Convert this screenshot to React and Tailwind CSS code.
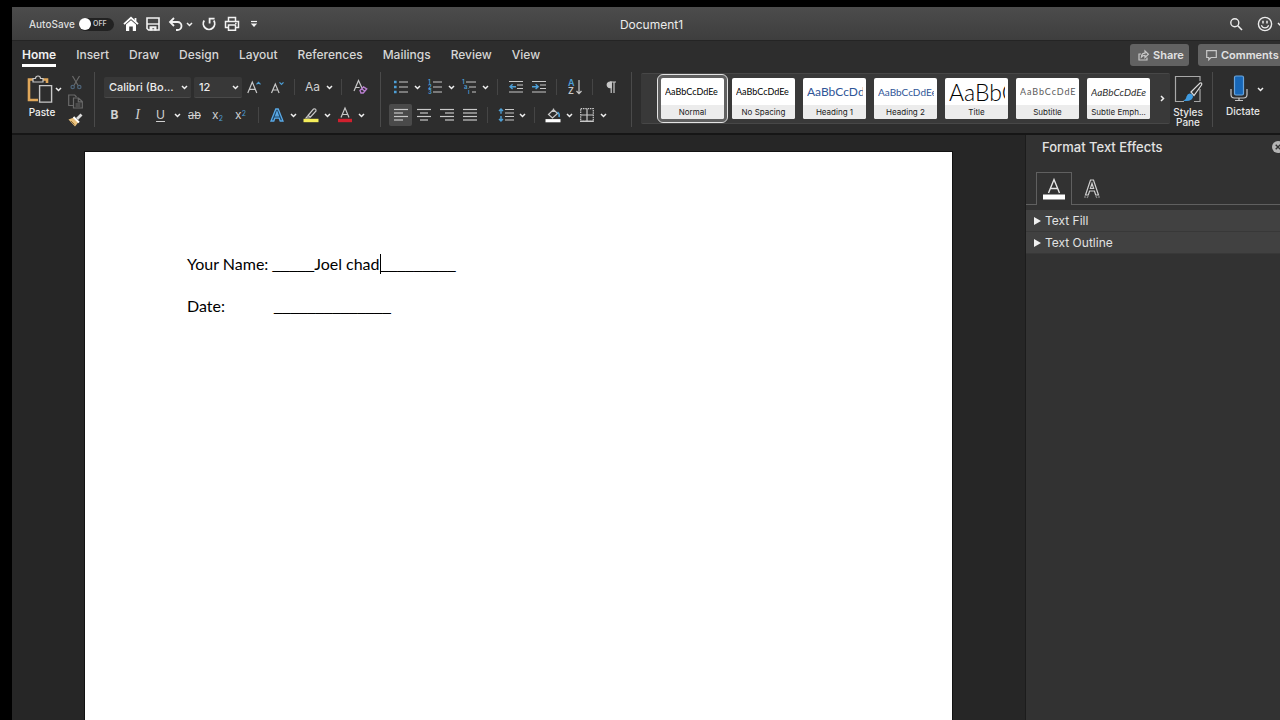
import React from "react";
import clsx from "clsx";

const TABS = [
  "Home",
  "Insert",
  "Draw",
  "Design",
  "Layout",
  "References",
  "Mailings",
  "Review",
  "View",
];

const STYLES = [
  { name: "Normal", sample: "text-[9px] text-black" },
  { name: "No Spacing", sample: "text-[9px] text-black" },
  { name: "Heading 1", sample: "text-[12px] text-[#2f5597]" },
  { name: "Heading 2", sample: "text-[10px] text-[#2f5597]" },
  { name: "Title", sample: "text-[23px] font-light text-black" },
  { name: "Subtitle", sample: "text-[9px] tracking-widest text-[#5a5a5a]" },
  { name: "Subtle Emph...", sample: "text-[10px] italic text-[#303030]" },
];

const SANS = "font-['Inter','Liberation_Sans',sans-serif]";
const BODY = "font-['Lato','Liberation_Sans',sans-serif]";

/* ---------- small building blocks ---------- */

function Icon({ w = 16, h = 16, className, children }) {
  return (
    <svg
      width={w}
      height={h}
      viewBox={`0 0 ${w} ${h}`}
      fill="none"
      stroke="#c8c8c8"
      strokeWidth="1.2"
      className={clsx("shrink-0 overflow-visible", className)}
      aria-hidden="true"
    >
      {children}
    </svg>
  );
}

function Chevron() {
  return (
    <Icon w={7} h={5}>
      <path d="M1 1l2.5 2.5L6 1" stroke="#f0f0f0" strokeWidth="1.5" />
    </Icon>
  );
}

function Tool({ label, active, children }) {
  return (
    <button
      type="button"
      aria-label={label}
      className={clsx(
        "flex h-[22px] w-[23px] items-center justify-center rounded-xs",
        active && "bg-[#4a4a4a]",
      )}
    >
      {children}
    </button>
  );
}

function More({ label }) {
  return (
    <button
      type="button"
      aria-label={label}
      className="flex h-[22px] w-[11px] items-center justify-center"
    >
      <Chevron />
    </button>
  );
}

function Split() {
  return (
    <span className="flex w-[13px] justify-center">
      <span className="h-4 w-px bg-[#454545]" />
    </span>
  );
}

function GroupLine() {
  return <span className="w-px shrink-0 self-stretch bg-[#4a4a4a]" />;
}

function Lines({ rows }) {
  return (
    <Icon w={14} h={14}>
      {rows.map(([x1, x2], i) => (
        <path key={i} d={`M${x1} ${1.5 + i * 3.5}H${x2}`} />
      ))}
    </Icon>
  );
}

/* ---------- title bar ---------- */

function TitleBar() {
  return (
    <header className="grid h-[33px] grid-cols-[1fr_auto_1fr] items-center bg-linear-to-b from-[#4c4c4c] to-[#3e3e3e] pt-px">
      <div className="flex items-center pl-[17px]">
        <label
          htmlFor="autosave"
          className="w-[50px] text-[10px] leading-4 font-medium text-[#dedede]"
        >
          AutoSave
        </label>
        <span className="relative flex h-[13px] w-[35px] items-center rounded-full bg-[#222222]">
          <input
            id="autosave"
            type="checkbox"
            role="switch"
            className="absolute inset-0 appearance-none"
          />
          <span className="size-3 rounded-full bg-white" />
          <span className="ml-0.5 text-[7px] leading-3 font-semibold text-[#c9c9c9]">
            OFF
          </span>
        </span>
        <div className="ml-[9px] flex items-center">
          <button type="button" aria-label="Home" className="w-[22px]">
            <Icon>
              <path d="M1 8.2L8 1.8l7 6.4" stroke="#fff" strokeWidth="1.8" />
              <path d="M12.5 2v4" stroke="#fff" strokeWidth="1.8" />
              <path
                d="M3 8.6L8 4.2l5 4.4V15H9.8v-4.5H6.2V15H3z"
                fill="#fff"
                stroke="none"
              />
            </Icon>
          </button>
          <button type="button" aria-label="Save" className="w-[23px]">
            <Icon>
              <path
                d="M2 2h12v12H3.5L2 12.5z"
                stroke="#f2f2f2"
                strokeWidth="1.6"
              />
              <path d="M2 8h12" stroke="#f2f2f2" strokeWidth="1.4" />
              <path
                d="M4.5 10.2h7v4.3H9.2v-2.2H7.4v2.2H4.5z"
                fill="#f2f2f2"
                stroke="none"
              />
            </Icon>
          </button>
          <button type="button" aria-label="Undo" className="w-[18px]">
            <Icon>
              <path
                d="M6 2L2 6l4 4M2.3 6h7.2a4 4 0 0 1 0 8H8"
                stroke="#f2f2f2"
                strokeWidth="1.8"
              />
            </Icon>
          </button>
          <button type="button" aria-label="Undo history" className="w-[15px]">
            <Chevron />
          </button>
          <button type="button" aria-label="Repeat" className="w-[23px]">
            <Icon>
              <path
                d="M3.2 4.6a5.7 5.7 0 1 0 9.6 0M8.6 7.4V2.6h5"
                stroke="#f2f2f2"
                strokeWidth="1.8"
              />
            </Icon>
          </button>
          <button type="button" aria-label="Print" className="w-[26px]">
            <Icon>
              <path d="M4.5 5V1.5h7V5" stroke="#f2f2f2" strokeWidth="1.5" />
              <path
                d="M4 11.5H1.5v-6h13v6H12"
                stroke="#f2f2f2"
                strokeWidth="1.5"
              />
              <path d="M4.500 9h7v5.300h-7z" stroke="#f2f2f2" strokeWidth="1.5" />
              <path d="M11 7.300h1.600" stroke="#f2f2f2" />
            </Icon>
          </button>
          <button type="button" aria-label="Customize toolbar">
            <Icon w={8} h={8}>
              <path d="M1 1.5h6" stroke="#f2f2f2" />
              <path d="M0.800 3.600h6.400L4 7z" fill="#f2f2f2" stroke="none" />
            </Icon>
          </button>
        </div>
      </div>
      <h1 className="pt-0.5 text-[12px] leading-4 text-[#ececec]">Document1</h1>
      <div className="flex items-center justify-end pr-[7px]">
        <button type="button" aria-label="Search" className="mr-3.5">
          <Icon w={14} h={14}>
            <circle cx="5.8" cy="5.8" r="4" stroke="#ececec" strokeWidth="1.4" />
            <path d="M8.8 8.8L13 13" stroke="#ececec" strokeWidth="1.6" />
          </Icon>
        </button>
        <button
          type="button"
          aria-label="Feedback"
          className="flex items-center gap-1"
        >
          <Icon>
            <circle cx="8" cy="8" r="6.6" stroke="#ececec" strokeWidth="1.4" />
            <path d="M6 4.8v2.6M10 4.8v2.6" stroke="#ececec" strokeWidth="1.5" />
            <path d="M4.4 9.2a3.8 3.8 0 0 0 7.2 0" stroke="#ececec" />
          </Icon>
          <Chevron />
        </button>
      </div>
    </header>
  );
}

/* ---------- tab strip ---------- */

function TabStrip({ tab, onSelect }) {
  return (
    <div className="flex h-[30px] items-start border-t border-[#242424]">
      <nav className="flex gap-5 pl-[10px]">
        {TABS.map((name) => (
          <button
            key={name}
            type="button"
            onClick={() => onSelect(name)}
            className={clsx(
              "mt-1.5 flex h-5 items-start border-b-3 text-[12px] leading-4",
              name === tab
                ? "border-white font-semibold text-[#f0f0f0]"
                : "border-transparent font-medium text-[#d6d6d6]",
            )}
          >
            {name}
          </button>
        ))}
      </nav>
      <div className="mt-[3px] ml-auto flex gap-[9px] pr-[7px] text-[11px] leading-4 font-semibold text-[#e2e2e2]">
        <button
          type="button"
          className="flex h-[22px] w-[59px] items-center gap-1 rounded-[3px] bg-[#626262] pl-2"
        >
          <Icon w={11} h={12}>
            <path d="M3 5H1v6h8V8.5" />
            <path d="M3.4 8c.2-2.6 1.5-3.8 3.6-3.800V2l3.400 3.300L7 8.500V6.300C5.500 6.300 4.400 6.800 3.400 8z" />
          </Icon>
          Share
        </button>
        <button
          type="button"
          className="flex h-[22px] w-[86px] items-center gap-1 rounded-[3px] bg-[#626262] pl-2"
        >
          <Icon w={11} h={12}>
            <path d="M.7 1.700h9.600v6.800H5L2.800 10.800V8.500H.7z" />
          </Icon>
          Comments
        </button>
      </div>
    </div>
  );
}

/* ---------- ribbon ---------- */

function ClipboardGroup() {
  return (
    <div className="flex w-[82px] pl-[15px]">
      <div className="flex flex-col">
        <div className="flex items-center gap-0.5 pt-[3px]">
          <button type="button" aria-label="Paste clipboard">
            <Icon w={26} h={29}>
              <path d="M7 4.500H2v20.500h9" stroke="#e0a75a" strokeWidth="2.6" />
              <path d="M16 4.500h4V8" stroke="#e0a75a" strokeWidth="2.6" />
              <path
                d="M6 7V3.500h2.500a2.500 2.500 0 0 1 5 0H16V7z"
                fill="#2d2d2d"
              />
              <path
                d="M12.600 10.600h12v16.500h-12z"
                fill="#2d2d2d"
                strokeWidth="1.4"
              />
            </Icon>
          </button>
          <Chevron />
        </div>
        <span className="mt-0.5 w-[30px] text-center text-[10px] leading-3 font-medium text-[#f0f0f0]">
          Paste
        </span>
      </div>
      <div className="flex flex-col items-center gap-1 pt-[3px] pl-1.5">
        <button type="button" aria-label="Cut">
          <Icon w={14} h={15}>
            <g stroke="#6a6a6a">
              <path d="M3.500 1l5.600 9.500M10.500 1L4.900 10.500" />
              <circle cx="3.700" cy="12" r="1.700" stroke="#4e6478" />
              <circle cx="10.300" cy="12" r="1.700" stroke="#4e6478" />
            </g>
          </Icon>
        </button>
        <button type="button" aria-label="Copy">
          <Icon w={15} h={15}>
            <g stroke="#6a6a6a">
              <path d="M5 11.500H.7V1h6L8.500 3" />
              <path d="M5.500 4h5l3.800 3.500V14H5.500zM10.300 4v3.800h4M7.500 10h5M7.500 12h5" />
            </g>
          </Icon>
        </button>
        <button type="button" aria-label="Format painter">
          <Icon w={15} h={14}>
            <path
              d="M.5 6.500L6 4.500l4.500 4.500L7 13.500z"
              fill="#e9c07b"
              stroke="none"
            />
            <path d="M5.500 4l5.500 5.500" stroke="#fff" strokeWidth="2" />
            <path d="M9 6l4.500-4.500" stroke="#dcdcdc" strokeWidth="2.8" />
            <path d="M3 8l3.500 3.500" stroke="#7d5a20" strokeWidth="0.8" />
          </Icon>
        </button>
      </div>
    </div>
  );
}

function Combo({ label, value, className }) {
  return (
    <span className={clsx("relative flex items-center", className)}>
      <select
        aria-label={label}
        className="h-[21px] w-full appearance-none rounded-xs border-b border-[#4a4a4a] bg-[#383838] pl-[5px] text-[11px] leading-4 font-medium text-[#ececec]"
      >
        <option>{value}</option>
      </select>
      <span className="pointer-events-none absolute right-[3px]">
        <Chevron />
      </span>
    </span>
  );
}

function FontGroup() {
  return (
    <div className="flex flex-col gap-1.5 px-2 pt-1">
      <div className="flex items-center">
        <Combo label="Font" value="Calibri (Bo..." className="ml-px w-[87px]" />
        <Combo label="Font size" value="12" className="ml-[3px] w-[48px]" />
        <Tool label="Grow font">
          <Icon w={16} h={15}>
            <path d="M1.800 13L6.300 2 10.800 13M3.400 9.300h5.800" />
            <path d="M10.500 4.300l2-2 2 2" stroke="#4d9fd6" />
          </Icon>
        </Tool>
        <Tool label="Shrink font">
          <Icon w={16} h={15}>
            <path d="M2.500 13L6.300 4 10.100 13M3.900 10h4.800" />
            <path d="M10.500 2.300l2 2 2-2" stroke="#4d9fd6" />
          </Icon>
        </Tool>
        <Split />
        <Tool label="Change case">
          <span className="text-[12px] leading-4 text-[#d0d0d0]">Aa</span>
        </Tool>
        <More label="Case options" />
        <Split />
        <Tool label="Clear formatting">
          <Icon>
            <path d="M2 12L6.500 1.500 10 9M3.600 8.500h4" />
            <path
              d="M8 11.500l3.500-3.500 3.200 2-3.500 4H9zM9.700 9.800l2.800 2.200"
              stroke="#b97fd0"
              strokeWidth="1.4"
            />
          </Icon>
        </Tool>
      </div>
      <div className="flex items-center text-[12px] leading-4 text-[#d0d0d0]">
        <Tool label="Bold">
          <b className="font-bold">B</b>
        </Tool>
        <Tool label="Italic">
          <i className="font-['Liberation_Serif',serif] text-[14px]">I</i>
        </Tool>
        <Tool label="Underline">
          <u className="underline-offset-2">U</u>
        </Tool>
        <More label="Underline options" />
        <Tool label="Strikethrough">
          <s className="text-[11px]">ab</s>
        </Tool>
        <Tool label="Subscript">
          <span>
            x<sub className="text-[7px] text-[#4d9fd6]">2</sub>
          </span>
        </Tool>
        <Tool label="Superscript">
          <span>
            x<sup className="text-[7px] text-[#4d9fd6]">2</sup>
          </span>
        </Tool>
        <Split />
        <Tool label="Text effects">
          <Icon>
            <path
              d="M2 14L6.800 2h2.400L14 14h-2.800l-1-2.800H5.800l-1 2.800zM6.700 8.800h2.600L8 5z"
              stroke="#5aa9e6"
              strokeWidth="1.3"
              fill="#1d4668"
            />
          </Icon>
        </Tool>
        <More label="Text effect options" />
        <Tool label="Highlight">
          <Icon>
            <path d="M5 8.500l5.500-6.500q2.800-.8 2.500 2L7.500 10zM5 8.500L3 11h3l1.500-1" />
            <path d="M.5 13.500h15" stroke="#f5ee5a" strokeWidth="3.400" />
          </Icon>
        </Tool>
        <More label="Highlight colours" />
        <Tool label="Font colour">
          <Icon>
            <path d="M4 10.500L8 1l4 9.500M5.400 7.500h5.200" />
            <path d="M1 13.500h14" stroke="#d0202e" strokeWidth="3.400" />
          </Icon>
        </Tool>
        <More label="Font colours" />
      </div>
    </div>
  );
}

function ParagraphGroup() {
  return (
    <div className="flex flex-col gap-1.5 pt-1 pr-[9px] pl-2">
      <div className="flex items-center">
        <Tool label="Bullets">
          <Icon w={14} h={14}>
            <path d="M5 2h9M5 7h9M5 12h9" />
            <path
              d="M0 2h2.600M0 7h2.600M0 12h2.600"
              stroke="#4d9fd6"
              strokeWidth="2.6"
            />
          </Icon>
        </Tool>
        <More label="Bullet styles" />
        <Tool label="Numbering">
          <Icon w={14} h={16}>
            <path d="M5 3h9M5 8h9M5 13h9" />
            <g fill="#4d9fd6" stroke="none" fontSize="6" fontWeight="600">
              <text x="0" y="5">1</text>
              <text x="0" y="10">2</text>
              <text x="0" y="15">3</text>
            </g>
          </Icon>
        </Tool>
        <More label="Number styles" />
        <Tool label="Multilevel list">
          <Icon w={14} h={16}>
            <path d="M4 3h10M7 8h7M10 13h4" />
            <g fill="#4d9fd6" stroke="none" fontSize="6" fontWeight="600">
              <text x="0" y="5">1</text>
              <text x="2" y="10">a</text>
              <text x="6" y="15">i</text>
            </g>
          </Icon>
        </Tool>
        <More label="List levels" />
        <Split />
        <Tool label="Decrease indent">
          <Icon w={14} h={14}>
            <path d="M0 1.500h14M8 5h6M8 8.500h6M0 12h14" />
            <path
              d="M7 6.700H1.200M3.600 4.300L1 6.700l2.600 2.400"
              stroke="#4d9fd6"
              strokeWidth="1.4"
            />
          </Icon>
        </Tool>
        <Tool label="Increase indent">
          <Icon w={14} h={14}>
            <path d="M0 1.500h14M8 5h6M8 8.500h6M0 12h14" />
            <path
              d="M0 6.700h6M3.600 4.300l2.600 2.400-2.600 2.400"
              stroke="#4d9fd6"
              strokeWidth="1.4"
            />
          </Icon>
        </Tool>
        <Split />
        <Tool label="Sort">
          <Icon>
            <path d="M12 1v13.500M9.500 12l2.500 2.700 2.500-2.700" />
            <g stroke="none" fontSize="9" fontWeight="600">
              <text x="1" y="7" fill="#4d9fd6">A</text>
              <text x="1" y="15" fill="#c8c8c8">Z</text>
            </g>
          </Icon>
        </Tool>
        <Split />
        <Tool label="Show formatting marks">
          <Icon w={10} h={12}>
            <path
              d="M5.200 1H4a2.800 2.800 0 0 0 0 5.600h1.200z"
              fill="#c8c8c8"
            />
            <path d="M5.200 1v11M8 1v11M4 1h6" />
          </Icon>
        </Tool>
      </div>
      <div className="flex items-center">
        <Tool label="Align left" active>
          <Lines rows={[[0, 14], [0, 9], [0, 14], [0, 9]]} />
        </Tool>
        <Tool label="Center">
          <Lines rows={[[0, 14], [3, 11], [0, 14], [3, 11]]} />
        </Tool>
        <Tool label="Align right">
          <Lines rows={[[0, 14], [5, 14], [0, 14], [5, 14]]} />
        </Tool>
        <Tool label="Justify">
          <Lines rows={[[0, 14], [0, 14], [0, 14], [0, 14]]} />
        </Tool>
        <Split />
        <Tool label="Line spacing">
          <Icon w={16} h={14}>
            <path d="M7 1.500h9M7 5h9M7 8.500h9M7 12h9" />
            <path
              d="M3 1v4.700M1 3l2-2 2 2M3 8v5M1 11l2 2 2-2"
              stroke="#4d9fd6"
              strokeWidth="1.4"
            />
          </Icon>
        </Tool>
        <More label="Spacing options" />
        <Split />
        <Tool label="Shading">
          <Icon>
            <path d="M3.500 7.500L8.500 2.500l4 4-5 4.500zM8.500 5V1.500" />
            <path d="M12.500 5q2.500 2 1.500 5" stroke="#4d9fd6" strokeWidth="1.6" />
            <path d="M.5 13.700h15" stroke="#fff" strokeWidth="3.200" />
          </Icon>
        </Tool>
        <More label="Shading colours" />
        <Tool label="Borders">
          <Icon w={14} h={14}>
            <path d="M.7.700h12.600v12.600H.7z" strokeDasharray="1.5 0.8" />
            <path d="M7 1v12M1 7h12" />
            <path d="M.2 13.300h13.600" strokeWidth="1.4" />
          </Icon>
        </Tool>
        <More label="Border options" />
      </div>
    </div>
  );
}

function StyleGallery() {
  const [selected, setSelected] = React.useState("Normal");

  return (
    <div className="mt-px mb-[3px] ml-[9px] flex items-center rounded-xs border-y border-[#474747] bg-[#393939] pl-5">
      <div className="flex gap-2">
        {STYLES.map(({ name, sample }) => (
          <button
            key={name}
            type="button"
            onClick={() => setSelected(name)}
            className={clsx(
              "flex h-[41px] w-[63px] flex-col overflow-hidden rounded-xs bg-white",
              name === selected &&
                "ring-3 ring-[#606060] outline-1 outline-offset-3 outline-[#e4e4e4]",
            )}
          >
            <span
              className={clsx(
                "mx-1 flex h-[27px] w-[56px] items-center overflow-hidden leading-6 whitespace-nowrap",
                BODY,
                sample,
              )}
            >
              AaBbCcDdEe
            </span>
            <span className="h-[14px] w-full bg-[#ececec] text-center text-[8px] leading-[14px] text-[#222222]">
              {name}
            </span>
          </button>
        ))}
      </div>
      <button
        type="button"
        aria-label="More styles"
        className="flex w-5 items-center justify-center pl-1"
      >
        <Icon w={5} h={7}>
          <path d="M1 1l2.500 2.500L1 6" stroke="#f0f0f0" strokeWidth="1.5" />
        </Icon>
      </button>
    </div>
  );
}

function Ribbon() {
  return (
    <section
      aria-label="Ribbon"
      className="flex items-stretch border-b-2 border-[#161616] pt-0.5 pb-[6px]"
    >
      <ClipboardGroup />
      <GroupLine />
      <FontGroup />
      <span className="w-px" />
      <GroupLine />
      <ParagraphGroup />
      <GroupLine />
      <StyleGallery />
      <button
        type="button"
        className="ml-px flex w-[34px] flex-col items-center pt-[3px] text-[10px] leading-[10px] font-medium text-[#e6e6e6]"
      >
        <Icon w={28} h={28} className="mb-1">
          <path
            d="M18 1.500H1.500v25H10M26 14v12.500h-6M18 1.500h8V6"
            stroke="#a8a8a8"
          />
          <path
            d="M17 17L26 8q2.500-.5 1.500 2L20 20.500z"
            stroke="#dcdcdc"
            fill="#2d2d2d"
          />
          <path
            d="M9 25.500q3-.5 3.500-4 1.500-4 5-2.500 3 2.500 0 5.500-3.500 2.500-8.500 1z"
            fill="#3f9be0"
            stroke="none"
          />
        </Icon>
        Styles
        <br />
        Pane
      </button>
      <span className="w-[7px]" />
      <GroupLine />
      <div className="flex pt-[3px] pl-3">
        <button
          type="button"
          className="flex w-9 flex-col items-center text-[10px] leading-3 font-medium text-[#e6e6e6]"
        >
          <Icon w={18} h={28} className="mr-2 mb-0.5">
            <rect
              x="4.500"
              y="1"
              width="9"
              height="19"
              rx="1.500"
              fill="#1767b8"
              stroke="#6aa5dc"
            />
            <path d="M1 14v5.500q0 3.500 3.500 3.500h9q3.500 0 3.500-3.500V14M9 23v2.500M5 25.500h8" />
          </Icon>
          Dictate
        </button>
        <button
          type="button"
          aria-label="Dictate options"
          className="-ml-1.5 flex h-7 w-[11px] items-center justify-center"
        >
          <Chevron />
        </button>
      </div>
    </section>
  );
}

/* ---------- document and side pane ---------- */

function Blank({ count }) {
  return (
    <span className="font-['Liberation_Sans',sans-serif] text-[15px]">
      {"_".repeat(count)}
    </span>
  );
}

function Page() {
  return (
    <article
      className={clsx(
        "mt-[17px] flex-1 bg-white px-[102px] pt-[101px] text-[16px] leading-[21px] text-black outline-1 outline-[#111111]",
        BODY,
      )}
    >
      <p className="mb-[21px] flex items-center whitespace-pre">
        Your Name: <Blank count={5} />
        Joel chad
        <span className="h-5 w-px bg-black" />
        <Blank count={9} />
      </p>
      <p className="flex items-center">
        <span className="w-[87px]">Date:</span>
        <Blank count={14} />
      </p>
    </article>
  );
}

function EffectsPane() {
  return (
    <aside className="flex w-[266px] shrink-0 flex-col border-l border-[#1c1c1c] bg-[#323232]">
      <div className="flex items-center justify-between pt-[3px] pr-[7px] pl-4">
        <h2 className="text-[13px] leading-[18px] font-medium text-[#e2e2e2]">
          Format Text Effects
        </h2>
        <button type="button" aria-label="Close pane">
          <Icon w={12} h={12}>
            <circle cx="6" cy="6" r="6" fill="#b4b4b4" stroke="none" />
            <path
              d="M3.700 3.700l4.600 4.600M8.300 3.700L3.700 8.300"
              stroke="#323232"
              strokeWidth="1.4"
            />
          </Icon>
        </button>
      </div>
      <div
        role="tablist"
        className="mt-4 flex border-b border-[#606060] pl-[10px]"
      >
        <button
          type="button"
          role="tab"
          aria-selected="true"
          aria-label="Text fill and outline"
          className="-mb-px flex h-[33px] w-9 items-center justify-center border border-b-0 border-[#606060] bg-[#323232]"
        >
          <Icon w={22} h={22}>
            <path
              d="M5.500 15L11 1.500 16.500 15M7.300 10.500h7.400"
              stroke="#e6e6e6"
              strokeWidth="1.4"
            />
            <path d="M0 19h22" stroke="#fff" strokeWidth="5" />
          </Icon>
        </button>
        <button
          type="button"
          role="tab"
          aria-selected="false"
          aria-label="Text effects"
          className="flex h-8 w-10 items-center justify-center"
        >
          <Icon w={16} h={21}>
            <path
              d="M1.500 17L6.500 2h3l5 15h-2.800l-1.300-4H5.600l-1.300 4zM6.400 10.500h3.200L8 5.500z"
              stroke="#cfcfcf"
            />
            <path
              d="M3 20l1.200-2M13 20l-1.200-2M1 20v-2M15 20v-2"
              stroke="#8a8a8a"
            />
          </Icon>
        </button>
      </div>
      <div className="mt-[5px] flex flex-col text-[12px] leading-4 text-[#e2e2e2]">
        {["Text Fill", "Text Outline"].map((name) => (
          <button
            key={name}
            type="button"
            aria-expanded="false"
            className="flex h-[22px] items-center gap-1 border-b border-[#383838] bg-[#414141] pl-2"
          >
            <Icon w={7} h={8}>
              <path d="M0 0l7 4-7 4z" fill="#f0f0f0" stroke="none" />
            </Icon>
            {name}
          </button>
        ))}
      </div>
    </aside>
  );
}

export default function App() {
  const [tab, setTab] = React.useState("Home");

  return (
    <div
      className={clsx(
        "flex min-h-screen flex-col overflow-hidden bg-black pt-[7px] pl-3",
        SANS,
      )}
    >
      <div className="-mr-[11px] flex flex-1 flex-col bg-[#2d2d2d]">
        <TitleBar />
        <TabStrip tab={tab} onSelect={setTab} />
        <Ribbon />
        <main className="flex flex-1 items-stretch bg-[#262626]">
          <div className="flex flex-1 flex-col px-[73px]">
            <Page />
          </div>
          <EffectsPane />
        </main>
      </div>
    </div>
  );
}
